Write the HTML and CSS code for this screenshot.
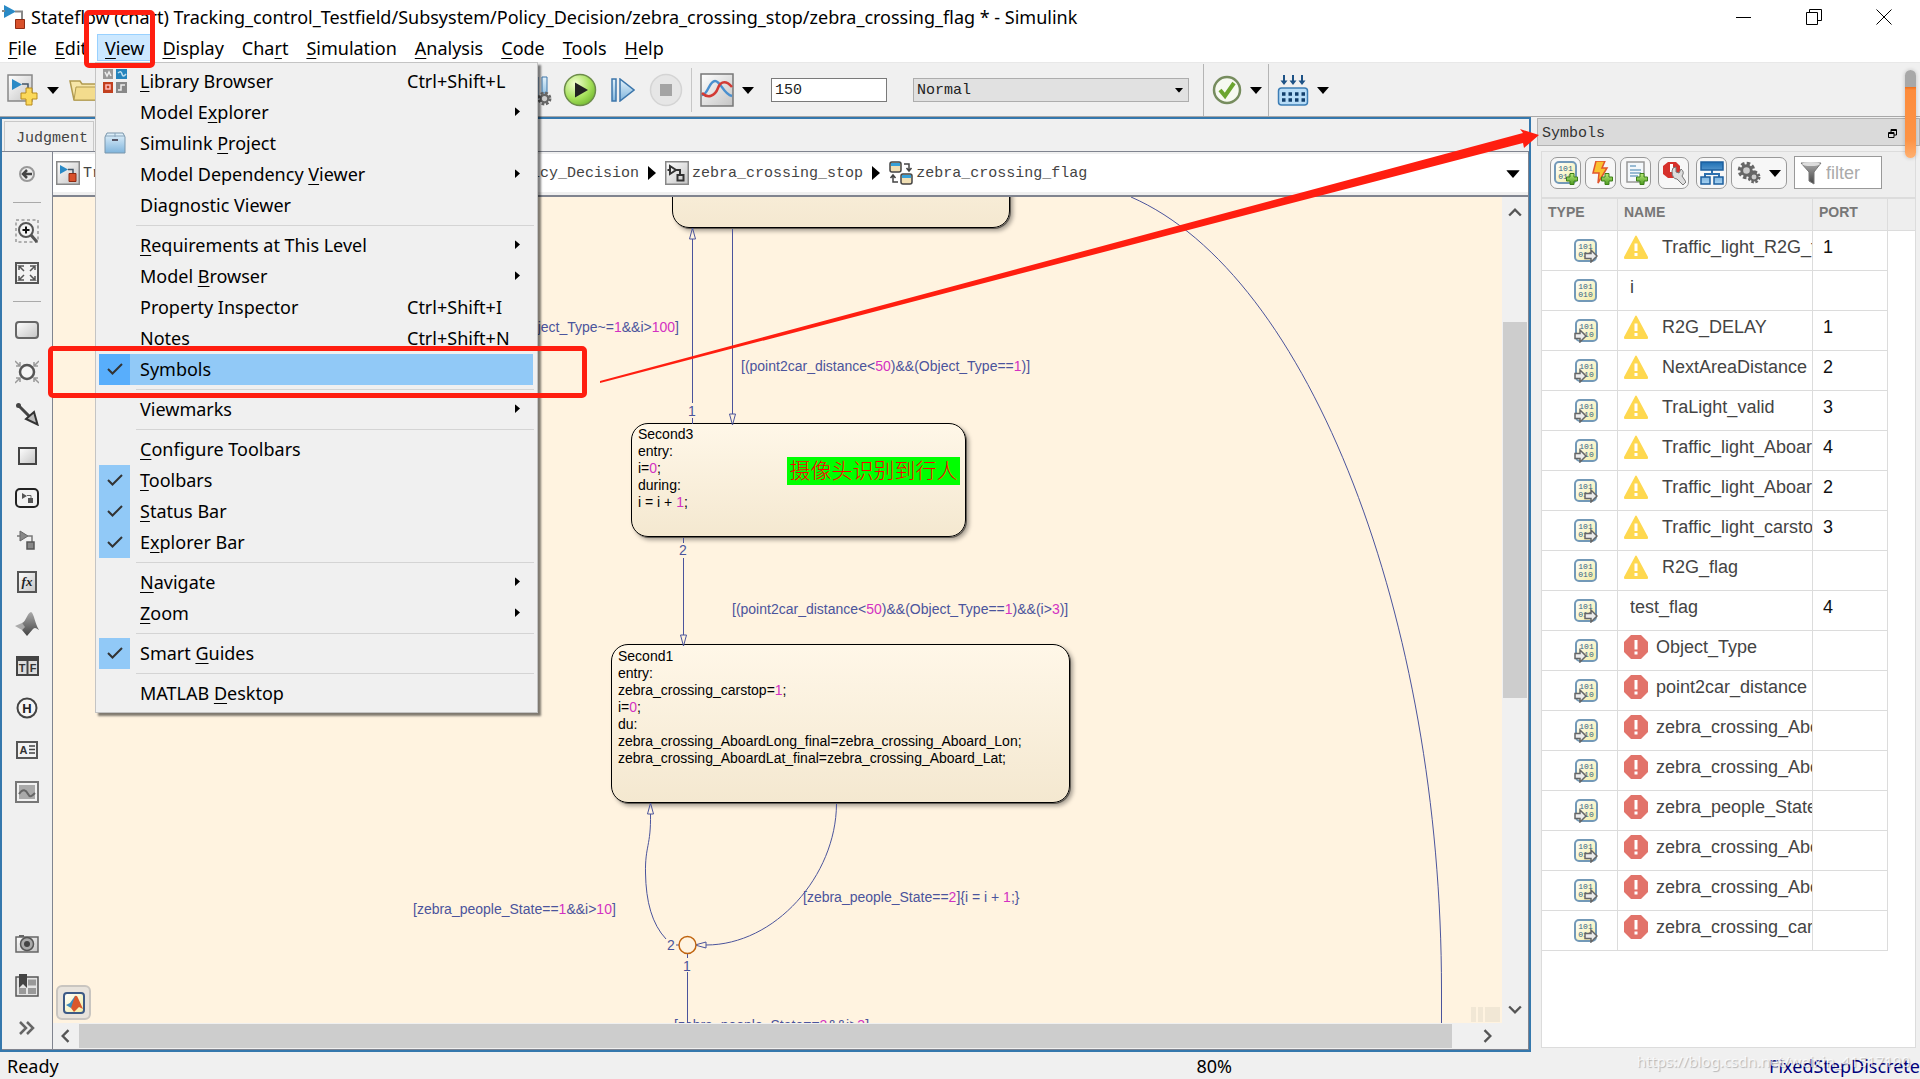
FILE: index.html
```html
<!DOCTYPE html>
<html lang="en">
<head>
<meta charset="utf-8">
<title>Stateflow (chart) - Simulink</title>
<link rel="stylesheet" href="styles.css">
</head>
<body>
<svg class="defs" aria-hidden="true">
  <defs>
    <linearGradient id="gCream" x1="0" y1="0" x2="1" y2="1"><stop offset="0" stop-color="#fff"/><stop offset="1" stop-color="#f3eca0"/></linearGradient>
    <linearGradient id="gGray" x1="0" y1="0" x2="1" y2="1"><stop offset="0" stop-color="#fff"/><stop offset="1" stop-color="#c4c4c4"/></linearGradient>
    <linearGradient id="gDark" x1="0" y1="0" x2="0" y2="1"><stop offset="0" stop-color="#aaa"/><stop offset="1" stop-color="#444"/></linearGradient>
    <linearGradient id="gBlue" x1="0" y1="0" x2="0" y2="1"><stop offset="0" stop-color="#e3f2fb"/><stop offset="1" stop-color="#7fb4dc"/></linearGradient>
    <linearGradient id="gDeep" x1="0" y1="0" x2="0" y2="1"><stop offset="0" stop-color="#1e6fb4"/><stop offset="1" stop-color="#a9d3f2"/></linearGradient>
    <linearGradient id="gPlus" x1="0" y1="0" x2="0" y2="1"><stop offset="0" stop-color="#b9ea7a"/><stop offset="1" stop-color="#4e9b21"/></linearGradient>
    <radialGradient id="gPlay" cx=".35" cy=".3" r=".8"><stop offset="0" stop-color="#f2ffd2"/><stop offset=".6" stop-color="#a5e05a"/><stop offset="1" stop-color="#6db42c"/></radialGradient>
    <symbol id="data" viewBox="0 0 24 24"><rect x="1" y="1" width="21" height="21" rx="4" fill="url(#gCream)" stroke="#7399b8" stroke-width="2"/><text x="11.500" y="10" class="bits">101</text><text x="11.500" y="18" class="bits">010</text></symbol>
    <symbol id="arrowR" viewBox="0 0 24 24"><path d="M11 14.500h6v-3.500l6 6-6 6v-3.500h-6z" fill="#ececec" stroke="#666" stroke-width="1.500"/></symbol>
    <symbol id="out" viewBox="0 0 24 24"><use href="#data"/><use href="#arrowR"/></symbol>
    <symbol id="in" viewBox="0 0 24 24"><use href="#data" x="1"/><path d="M1 14.500h5v-3.500l6 6-6 6v-3.500H1z" fill="#ececec" stroke="#666" stroke-width="1.500"/></symbol>
    <symbol id="warn" viewBox="0 0 24 24"><path d="M11 1.500Q12-.5 13 1.500L24 22q.3 2-1 2H1q-1.300 0-1-2z" fill="#fed850"/><path d="M10.500 8.500h3v7.500h-3zM10.500 18h3v3h-3z" fill="#fff"/></symbol>
    <symbol id="err" viewBox="0 0 24 24"><path d="M7 0h10l7 7v10l-7 7H7l-7-7V7z" fill="#e2736a"/><path d="M10.500 5h3v9.500h-3zM10.500 16.500h3v3h-3z" fill="#fff"/></symbol>
    <symbol id="plus" viewBox="0 0 12 12"><path d="M4 .5h4V4h3.500v4H8v3.500H4V8H.5V4H4z" fill="url(#gPlus)" stroke="#3d8019"/></symbol>
    <symbol id="gear" viewBox="0 0 20 20"><circle cx="10" cy="10" r="7.500" fill="none" stroke="#666" stroke-width="3.500" stroke-dasharray="3.600 2.290"/><circle cx="10" cy="10" r="5" fill="#ccc" stroke="#666" stroke-width="3"/></symbol>
    <symbol id="caret" viewBox="0 0 12 8"><path d="M0 1h12L6 8z"/></symbol>
    <symbol id="model" viewBox="0 0 24 24"><rect x=".75" y=".75" width="22.500" height="22.500" fill="url(#gGray)" stroke="#888" stroke-width="1.500"/><path d="M4 4v9l8-4.500z" fill="#2a8ac6"/><path d="M12 8.500h5V13" fill="none" stroke="#456" stroke-width="1.500"/><path d="M13 12.500h7v8h-7z" fill="#d8512b" stroke="#8e2b12"/></symbol>
    <symbol id="subsys" viewBox="0 0 24 24"><rect x=".75" y=".75" width="22.500" height="22.500" fill="url(#gGray)" stroke="#888" stroke-width="1.500"/><path d="M5 5v8l6-4zM11 9h4v5M12.500 14h6v5.500h-6zM2.500 9H5" fill="none" stroke="#333" stroke-width="2"/></symbol>
    <symbol id="right" viewBox="0 0 8 14"><path d="M0 0l8 7-8 7z"/></symbol>
    <symbol id="tick" viewBox="0 0 16 12"><path d="M1 6l4.500 4.500L15 1" fill="none" stroke="#333" stroke-width="2"/></symbol>
  </defs>
</svg>

<header class="titlebar">
  <svg class="appicon" viewBox="0 0 24 26"><path d="M2 1v13l12-6.500z" fill="#2a8ac6"/><path d="M0 7h3M13 7.500h7V16" fill="none" stroke="#888" stroke-width="2"/><path d="M13.500 15.500h9v9h-9z" fill="#d8512b" stroke="#8e2b12"/></svg>
  <h1>Stateflow (chart) Tracking_control_Testfield/Subsystem/Policy_Decision/zebra_crossing_stop/zebra_crossing_flag * - Simulink</h1>
  <div class="winctl">
    <button aria-label="Minimize"><svg viewBox="0 0 16 16"><path d="M0 8.500h15" stroke="#000" fill="none"/></svg></button>
    <button aria-label="Restore"><svg viewBox="0 0 16 16"><path d="M.5 3.500h11v12H.5zM3.500 3.500V.5h12v11h-4" stroke="#000" fill="none"/></svg></button>
    <button aria-label="Close"><svg viewBox="0 0 16 16"><path d="M.5.5l15 15M15.500.5l-15 15" stroke="#000" fill="none"/></svg></button>
  </div>
</header>

<nav class="menubar">
  <button><u>F</u>ile</button><button><u>E</u>dit</button><button class="open"><u>V</u>iew</button><button><u>D</u>isplay</button><button>Cha<u>r</u>t</button><button><u>S</u>imulation</button><button><u>A</u>nalysis</button><button><u>C</u>ode</button><button><u>T</u>ools</button><button><u>H</u>elp</button>
</nav>

<div class="toolbar">
  <button class="tb" aria-label="New model"><svg class="i32" viewBox="0 0 32 32"><path d="M1 1h24v26H1z" fill="url(#gGray)" stroke="#888" stroke-width="1.500"/><path d="M5 5v11l10-5.500z" fill="#2a8ac6"/><path d="M15 10h6v6" fill="none" stroke="#456" stroke-width="1.500"/><path d="M19 14h6v5h5v6h-5v6h-6v-6h-5v-6h5z" fill="#fbd95a" stroke="#b98b1c"/></svg></button>
  <button class="drop" aria-label="New menu"><svg viewBox="0 0 12 8"><use href="#caret"/></svg></button>
  <button class="tb" aria-label="Open"><svg class="i32" viewBox="0 0 32 32"><path d="M1 7h10l2 3h15v16H5z" fill="#f7e6a8" stroke="#b19a4f" stroke-width="1.500"/><path d="M7 13h24l-3 13H5z" fill="#f3dc8d" stroke="#b19a4f"/></svg></button>
  <div class="hole"></div>
  <button class="tb" aria-label="Stepping options"><svg class="i32" viewBox="0 0 32 32"><path d="M12 3h5v22h-5zM21 3h5v16h-5z" fill="url(#gBlue)" stroke="#3c76ab"/><use href="#gear" x="16" y="17" width="15" height="15"/></svg></button>
  <button class="tb" aria-label="Run"><svg class="i34" viewBox="0 0 34 34"><circle cx="17" cy="17" r="15.500" fill="url(#gPlay)" stroke="#6d8c4b" stroke-width="1.500"/><path d="M12 9.500v15L25 17z" fill="#222"/></svg></button>
  <button class="tb step" aria-label="Step forward"><svg class="i24" viewBox="0 0 24 24"><path d="M1 1h4v22H1zM9 1v22l14-11z" fill="url(#gBlue)" stroke="#3c76ab" stroke-width="1.500"/></svg></button>
  <button class="tb stop" aria-label="Stop"><svg class="i34" viewBox="0 0 34 34"><circle cx="17" cy="17" r="15.500" fill="#e6e6e6" stroke="#d4d4d4" stroke-width="1.500"/><path d="M11 11h12v12H11z" fill="#a4a4a4"/></svg></button>
  <div class="vsep"></div>
  <button class="tb" aria-label="Scope"><svg class="i34" viewBox="0 0 34 34"><path d="M1 1h32v32H1z" fill="url(#gGray)" stroke="#777" stroke-width="1.500"/><path d="M2 22c6 0 7-14 13-14s8 13 17 15" fill="none" stroke="#4a90cf" stroke-width="2.500"/><path d="M2 20c6 6 13 3 16-5s9-7 14-1" fill="none" stroke="#d23b35" stroke-width="2.500"/></svg></button>
  <button class="drop" aria-label="Scope menu"><svg viewBox="0 0 12 8"><use href="#caret"/></svg></button>
  <input class="time" type="text" value="150" aria-label="Stop time">
  <div class="mode"><select aria-label="Simulation mode"><option>Normal</option></select><svg viewBox="0 0 12 8"><use href="#caret"/></svg></div>
  <div class="vsep full"></div>
  <button class="tb" aria-label="Check"><svg class="i30" viewBox="0 0 30 30"><circle cx="15" cy="15" r="13" fill="#f6f9f0" stroke="#768c5e" stroke-width="2.500"/><path d="M8 15l5 6 9-13" fill="none" stroke="#6ba52f" stroke-width="4"/></svg></button>
  <button class="drop" aria-label="Check menu"><svg viewBox="0 0 12 8"><use href="#caret"/></svg></button>
  <div class="vsep full near"></div>
  <button class="tb" aria-label="Build"><svg class="i32" viewBox="0 0 32 32"><path d="M7 1v8M16 1v8M25 1v8" stroke="#1d5286" stroke-width="2"/><path d="M3.500 6.500h7L7 11zM12.500 6.500h7L16 11zM21.500 6.500h7L25 11z" fill="#1d5286"/><rect x="1.500" y="14" width="29" height="17" rx="3" fill="#b7dcf7" stroke="#3c7db5" stroke-width="1.500"/><path d="M5 20h23M5 26h23" stroke="#123e6b" stroke-width="3.500" stroke-dasharray="3.500 3"/></svg></button>
  <button class="drop" aria-label="Build menu"><svg viewBox="0 0 12 8"><use href="#caret"/></svg></button>
</div>

<main class="work">
  <section class="editor">
    <div class="tabs"><a href="#chart" class="tab">Judgment</a></div>
    <div class="body">
      <aside class="palette">
        <button aria-label="Hide browser"><svg viewBox="0 0 24 24"><circle cx="12" cy="12" r="7" fill="#eee" stroke="#999" stroke-width="2"/><path d="M17 12H9M12 8l-4 4 4 4" fill="none" stroke="#444" stroke-width="2.500"/></svg></button>
        <hr>
        <button aria-label="Zoom"><svg viewBox="0 0 24 24"><path d="M1 1h22v22H1z" fill="none" stroke="#999" stroke-width="1.500" stroke-dasharray="3 2.500"/><circle cx="11" cy="11" r="7" fill="#f4f4f4" stroke="#555" stroke-width="2"/><path d="M11 7.500v7M7.500 11h7" stroke="#111" stroke-width="2"/><path d="M16 16l6 7" stroke="#555" stroke-width="3"/></svg></button>
        <button aria-label="Fit to view"><svg viewBox="0 0 24 24"><path d="M1 2h22v20H1z" fill="#f2f2f2" stroke="#555" stroke-width="2"/><path d="M9 10L4 5h5M4 5v4M15 10l5-5h-5M20 5v4M9 14l-5 5h5M4 19v-4M15 14l5 5h-5M20 19v-4" fill="none" stroke="#555" stroke-width="1.500"/></svg></button>
        <hr>
        <button aria-label="State"><svg viewBox="0 0 24 24"><rect x="1" y="4" width="22" height="16" rx="3" fill="url(#gGray)" stroke="#666" stroke-width="2"/></svg></button>
        <button aria-label="Junction"><svg viewBox="0 0 24 24"><circle cx="12" cy="12" r="7" fill="#f5f5f5" stroke="#555" stroke-width="2.500"/><path d="M0 1l5 5M5 2v4H1M24 1l-5 5M19 2v4h4M0 23l5-5M5 22v-4H1M24 23l-5-5M19 22v-4h4" fill="none" stroke="#999" stroke-width="1.500"/></svg></button>
        <button aria-label="Transition"><svg viewBox="0 0 24 24"><circle cx="3.500" cy="3.500" r="2.500" fill="#444"/><path d="M3 3l12 12" stroke="#444" stroke-width="3"/><path d="M19 10l3.500 12.500L11 17z" fill="#bbb" stroke="#333" stroke-width="2"/></svg></button>
        <button aria-label="Box"><svg viewBox="0 0 24 24"><path d="M4 4h17v16H4z" fill="url(#gGray)" stroke="#444" stroke-width="2"/></svg></button>
        <button aria-label="Simulink state"><svg viewBox="0 0 24 24"><rect x="1" y="3" width="22" height="18" rx="4" fill="#f2f2f2" stroke="#222" stroke-width="2"/><path d="M7 7v6l5-3zM13 12h5v5h-5z" fill="#555"/><path d="M12 9.500h4V12" fill="none" stroke="#666"/></svg></button>
        <button aria-label="Simulink function"><svg viewBox="0 0 24 24"><path d="M5 3v10l8-5z" fill="#888" stroke="#666"/><path d="M13 8h4v6M2 8h3" fill="none" stroke="#777" stroke-width="1.500"/><path d="M12 14h7v7h-7z" fill="#888" stroke="#555" stroke-width="1.500"/></svg></button>
        <button aria-label="Function"><svg viewBox="0 0 24 24"><path d="M3 2h18v20H3z" fill="url(#gGray)" stroke="#555" stroke-width="2"/><text x="12" y="16" class="gi">fx</text></svg></button>
        <button aria-label="MATLAB function"><svg viewBox="0 0 24 24"><path d="M0 14l7-3 4 4-4 3z" fill="#aaa"/><path d="M7 11c4-1 5-10 9-11 3 1 4 12 8 18-3-2-4-3-6-1l-6 7-5-6 3-3z" fill="url(#gDark)"/></svg></button>
        <button aria-label="Truth table"><svg viewBox="0 0 24 24"><path d="M2 3h21v18H2z" fill="#ddd" stroke="#444" stroke-width="2"/><path d="M2 5h21" stroke="#444" stroke-width="4"/><path d="M12.500 3v18" stroke="#444" stroke-width="2"/><text x="7" y="18" class="gt">T</text><text x="18" y="18" class="gt">F</text></svg></button>
        <button aria-label="History junction"><svg viewBox="0 0 24 24"><circle cx="12" cy="12" r="9.500" fill="#f6f6f6" stroke="#444" stroke-width="2"/><text x="12" y="16.500" class="gh">H</text></svg></button>
        <button aria-label="Annotation"><svg viewBox="0 0 24 24"><path d="M2 4h20v16H2z" fill="#f2f2f2" stroke="#555" stroke-width="2"/><text x="8.500" y="15.500" class="gt">A</text><path d="M14 8h6M14 11.500h6M14 15h6" stroke="#444" stroke-width="1.500"/></svg></button>
        <button aria-label="Image"><svg viewBox="0 0 24 24"><path d="M1 2h22v20H1z" fill="#f2f2f2" stroke="#777" stroke-width="2"/><path d="M4 5h16v14H4z" fill="#aaa"/><path d="M4 14c4-6 7-4 9 0s4 2 7-1" fill="none" stroke="#666" stroke-width="2"/></svg></button>
        <div class="grow"></div>
        <button aria-label="Screenshot"><svg viewBox="0 0 24 24"><path d="M1 5h22v15H1z" fill="url(#gGray)" stroke="#666" stroke-width="1.500"/><path d="M4 3h5v2H4z" fill="#666"/><circle cx="12" cy="12" r="6.500" fill="#aaa" stroke="#555" stroke-width="1.500"/><circle cx="12" cy="12" r="3" fill="#444"/></svg></button>
        <button aria-label="Viewmarks"><svg viewBox="0 0 24 24"><path d="M1 3h22v19H1z" fill="#e4e4e4" stroke="#555" stroke-width="1.500"/><path d="M13 5.500h8v6h-8zM4 14h7v6H4zM13 14h8v6h-8z" fill="#999"/><path d="M4 0h8v14l-4-4-4 4z" fill="#444"/></svg></button>
        <button aria-label="More"><svg viewBox="0 0 24 24"><path d="M5 6l6 6-6 6M12 6l6 6-6 6" fill="none" stroke="#666" stroke-width="2.500"/></svg></button>
      </aside>

      <div class="view">
        <div class="crumbs">
          <div class="path">
            <svg class="ci" viewBox="0 0 24 24"><use href="#model"/></svg><a href="#top">Tracking_control_Testfield</a>
            <svg class="ca" viewBox="0 0 8 14"><use href="#right"/></svg>
            <svg class="ci" viewBox="0 0 24 24"><use href="#subsys"/></svg><a href="#subsystem">Subsystem</a>
            <svg class="ca" viewBox="0 0 8 14"><use href="#right"/></svg>
            <svg class="ci" viewBox="0 0 24 24"><use href="#subsys"/></svg><a href="#policy">Policy_Decision</a>
            <svg class="ca" viewBox="0 0 8 14"><use href="#right"/></svg>
            <svg class="ci" viewBox="0 0 24 24"><use href="#subsys"/></svg><a href="#stop">zebra_crossing_stop</a>
            <svg class="ca" viewBox="0 0 8 14"><use href="#right"/></svg>
            <svg class="ci" viewBox="0 0 24 24"><rect x="1" y="1" width="11" height="10" rx="2" fill="#f0dfb4" stroke="#444" stroke-width="1.500"/><path d="M2 2h9v3H2z" fill="#36a0d8"/><rect x="12" y="13" width="11" height="10" rx="2" fill="#f0dfb4" stroke="#444" stroke-width="1.500"/><path d="M13 14h9v3h-9z" fill="#36a0d8"/><path d="M15 3h5v6M17.500 7l2.500 3 2.500-3M9 21H4v-6M1.500 17L4 14l2.500 3" fill="none" stroke="#444" stroke-width="1.500"/></svg><a href="#flag">zebra_crossing_flag</a>
          </div>
          <button class="more" aria-label="Path history"><svg viewBox="0 0 12 8"><use href="#caret"/></svg></button>
        </div>
        <div class="scroller">
          <div class="canvas">
            <div class="state s0"></div>
            <div class="state s3">Second3<br>entry:<br>i=<b>0</b>;<br>during:<br>i = i + <b>1</b>;<span class="note">摄像头识别到行人</span></div>
            <div class="state s1">Second1<br>entry:<br>zebra_crossing_carstop=<b>1</b>;<br>i=<b>0</b>;<br>du:<br>zebra_crossing_AboardLong_final=zebra_crossing_Aboard_Lon;<br>zebra_crossing_AboardLat_final=zebra_crossing_Aboard_Lat;</div>
            <svg class="wires" viewBox="53 197 1449 826">
              <path d="M692.500 424v-6M692.500 403V239M692.500 228l-3 11h6zM732.500 229v185M732.500 425l-3-11h6zM683.500 538v5M683.500 558v77M683.500 646l-3-11h6zM650.500 803l-3 11h6zM650.500 814C651 846 645 846 645.500 873C646 902 652 924 666 939M836.500 804C836 876 775 945 706 945M695 945l11-3v6zM676 945h3M687.500 954v4M687.500 972v51"/>
              <path d="M1131 197C1310 275 1441.500 620 1441.500 990V1023"/>
              <circle cx="687.500" cy="945" r="8.500"/>
              <g class="watermark"><path d="M1471 1007h5v15h-5zM1478 1007h5v15h-5zM1485 1007h15v15h-15z"/></g>
            </svg>
            <span class="lbl l1">[(Object_Type~=<b>1</b>&amp;&amp;i&gt;<b>100</b>]</span>
            <span class="lbl l2">[(point2car_distance&lt;<b>50</b>)&amp;&amp;(Object_Type==<b>1</b>)]</span>
            <span class="lbl l3">[(point2car_distance&lt;<b>50</b>)&amp;&amp;(Object_Type==<b>1</b>)&amp;&amp;(i&gt;<b>3</b>)]</span>
            <span class="lbl l4">[zebra_people_State==<b>1</b>&amp;&amp;i&gt;<b>10</b>]</span>
            <span class="lbl l5">[zebra_people_State==<b>2</b>]{i = i + <b>1</b>;}</span>
            <span class="lbl l6">[zebra_people_State==<b>2</b>&amp;&amp;i&gt;<b>3</b>]</span>
            <span class="lbl n1">1</span><span class="lbl n2">2</span><span class="lbl n3">2</span><span class="lbl n4">1</span>
            <button class="lang" aria-label="MATLAB action language"><svg viewBox="0 0 24 24"><rect x="2" y="2" width="20" height="20" rx="3" fill="url(#gCream)" stroke="#3c5a86" stroke-width="2"/><path d="M4 14l4-2 5-7 2 5-6 7z" fill="#3c8bbd"/><path d="M13 5q2-1 3 2l5 11-4-2-5 5-3-4z" fill="#d9572b"/></svg></button>
          </div>
          <div class="vbar"><svg viewBox="0 0 12 12"><path d="M1 9l5-5 5 5" class="chev"/></svg><i></i><svg viewBox="0 0 12 12"><path d="M1 3l5 5 5-5" class="chev"/></svg></div>
          <div class="hbar"><svg viewBox="0 0 12 12"><path d="M9 1L4 6l5 5" class="chev"/></svg><i></i><svg viewBox="0 0 12 12"><path d="M3 1l5 5-5 5" class="chev"/></svg></div>
        </div>
      </div>
    </div>
  </section>

  <aside class="symbols">
    <h2>Symbols<svg viewBox="0 0 9 9"><path d="M3 3V.5h5.500V6H6M.5 3.500H6v5H.5zM.5 4.500H6M3 1.500h5.500" fill="none" stroke="#000"/></svg></h2>
    <div class="pane">
      <div class="tools">
        <button aria-label="Create data"><svg viewBox="0 0 24 24"><use href="#data"/><use href="#plus" x="12" y="12" width="12" height="12"/></svg></button>
        <button aria-label="Create event"><svg viewBox="0 0 24 24"><path d="M7 0h9l-3 7h5L9 22l1-10H4z" fill="#f9c22f" stroke="#e1552c" stroke-width="1.500"/><use href="#plus" x="12" y="12" width="12" height="12"/></svg></button>
        <button class="wide" aria-label="Create message"><svg viewBox="0 0 24 24"><path d="M3 1h17v20H3z" fill="#f4f8fb" stroke="#999" stroke-width="1.500"/><path d="M6 5h6M6 9h11M6 12h11M6 15h8" stroke="#7aa7c7" stroke-width="1.500"/><use href="#plus" x="12" y="12" width="12" height="12"/></svg></button>
        <button class="wide" aria-label="Resolve symbols"><svg viewBox="0 0 24 24"><path d="M6 1h8l4 4v8l-4 4H6l-5-4V5z" fill="#d6312b"/><path d="M8 3h3v8H8z" fill="#fff"/><path d="M10 10q0-4 4-4v5l3 1 2-4q4 3 1 7l4 6-3 3-6-6q-5 0-5-8z" fill="#ddd" stroke="#777"/></svg></button>
        <button aria-label="Show hierarchy"><svg viewBox="0 0 24 24"><path d="M12 9v4M5 17v-4h14v4" fill="none" stroke="#2c6fae" stroke-width="2"/><path d="M1 1h22v8H1zM1 16h9v7H1zM14 16h9v7h-9z" fill="url(#gDeep)" stroke="#1d5f9e" stroke-width="1.500"/></svg></button>
        <button class="menu" aria-label="Settings"><svg viewBox="0 0 24 24"><use href="#gear" x="0" y="0" width="19" height="19"/><use href="#gear" x="10" y="9" width="14" height="14"/></svg><svg class="c" viewBox="0 0 12 8"><use href="#caret"/></svg></button>
        <label class="filter"><svg viewBox="0 0 22 24"><path d="M1 2h20l-7 9v12l-5-3v-9z" fill="url(#gDark)" stroke="#777"/><ellipse cx="11" cy="3" rx="9" ry="2" fill="#ddd"/></svg><input type="text" placeholder="filter" aria-label="filter"></label>
      </div>
      <table>
        <colgroup><col class="c1"><col class="c2"><col class="c3"><col></colgroup>
        <thead><tr><th>TYPE</th><th>NAME</th><th>PORT</th><th></th></tr></thead>
        <tbody>
          <tr><td><svg><use href="#out"/></svg></td><td class="w"><div><svg><use href="#warn"/></svg>Traffic_light_R2G_time</div></td><td>1</td></tr>
          <tr><td><svg><use href="#data"/></svg></td><td><div>i</div></td><td></td></tr>
          <tr><td><svg><use href="#in"/></svg></td><td class="w"><div><svg><use href="#warn"/></svg>R2G_DELAY</div></td><td>1</td></tr>
          <tr><td><svg><use href="#in"/></svg></td><td class="w"><div><svg><use href="#warn"/></svg>NextAreaDistance</div></td><td>2</td></tr>
          <tr><td><svg><use href="#in"/></svg></td><td class="w"><div><svg><use href="#warn"/></svg>TraLight_valid</div></td><td>3</td></tr>
          <tr><td><svg><use href="#in"/></svg></td><td class="w"><div><svg><use href="#warn"/></svg>Traffic_light_Aboard</div></td><td>4</td></tr>
          <tr><td><svg><use href="#out"/></svg></td><td class="w"><div><svg><use href="#warn"/></svg>Traffic_light_Aboard</div></td><td>2</td></tr>
          <tr><td><svg><use href="#out"/></svg></td><td class="w"><div><svg><use href="#warn"/></svg>Traffic_light_carstop</div></td><td>3</td></tr>
          <tr><td><svg><use href="#data"/></svg></td><td class="w"><div><svg><use href="#warn"/></svg>R2G_flag</div></td><td></td></tr>
          <tr><td><svg><use href="#out"/></svg></td><td><div>test_flag</div></td><td>4</td></tr>
          <tr><td><svg><use href="#in"/></svg></td><td class="e"><div><svg><use href="#err"/></svg>Object_Type</div></td><td></td></tr>
          <tr><td><svg><use href="#in"/></svg></td><td class="e"><div><svg><use href="#err"/></svg>point2car_distance</div></td><td></td></tr>
          <tr><td><svg><use href="#in"/></svg></td><td class="e"><div><svg><use href="#err"/></svg>zebra_crossing_Aboard</div></td><td></td></tr>
          <tr><td><svg><use href="#in"/></svg></td><td class="e"><div><svg><use href="#err"/></svg>zebra_crossing_Aboard</div></td><td></td></tr>
          <tr><td><svg><use href="#in"/></svg></td><td class="e"><div><svg><use href="#err"/></svg>zebra_people_State</div></td><td></td></tr>
          <tr><td><svg><use href="#out"/></svg></td><td class="e"><div><svg><use href="#err"/></svg>zebra_crossing_Aboard</div></td><td></td></tr>
          <tr><td><svg><use href="#out"/></svg></td><td class="e"><div><svg><use href="#err"/></svg>zebra_crossing_Aboard</div></td><td></td></tr>
          <tr><td><svg><use href="#out"/></svg></td><td class="e"><div><svg><use href="#err"/></svg>zebra_crossing_carstop</div></td><td></td></tr>
        </tbody>
      </table>
    </div>
  </aside>
</main>

<footer class="status"><span>Ready</span><span class="pct">80%</span><span class="solver">FixedStepDiscrete</span></footer>

<div class="popup">
  <button><svg class="mi" viewBox="0 0 24 24"><path d="M0 0h10v10H0z" fill="#999"/><path d="M2 3l2 4 2-4 2 4" stroke="#eee" fill="none" stroke-width="1.500"/><path d="M13 0h11v10H13z" fill="#2584bd"/><path d="M15 4q3-3 4 1t4 0" stroke="#bde" fill="none" stroke-width="1.500"/><path d="M0 13h10v11H0z" fill="#c2401f"/><path d="M3 16h4v4H3z" stroke="#fbb" fill="none" stroke-width="1.500"/><path d="M13 13h11v11H13z" fill="#888"/><path d="M15 21h3v-5h4" stroke="#eee" fill="none" stroke-width="1.500"/></svg><span><u>L</u>ibrary Browser</span><kbd>Ctrl+Shift+L</kbd></button>
  <button><span>Model E<u>x</u>plorer</span><svg class="sub" viewBox="0 0 8 14"><use href="#right"/></svg></button>
  <button><svg class="mi" viewBox="0 0 24 24"><path d="M2 6l2-4h16l2 4v16H2z" fill="url(#gBlue)" stroke="#7a96ab"/><path d="M2 5h20M12 2v4" stroke="#8aa6bb"/><path d="M9 8h6v2H9z" fill="#556"/></svg><span>Simulink <u>P</u>roject</span></button>
  <button><span>Model Dependency <u>V</u>iewer</span><svg class="sub" viewBox="0 0 8 14"><use href="#right"/></svg></button>
  <button><span>Diagnostic Viewer</span></button>
  <hr>
  <button><span><u>R</u>equirements at This Level</span><svg class="sub" viewBox="0 0 8 14"><use href="#right"/></svg></button>
  <button><span>Model <u>B</u>rowser</span><svg class="sub" viewBox="0 0 8 14"><use href="#right"/></svg></button>
  <button><span>Property Inspector</span><kbd>Ctrl+Shift+I</kbd></button>
  <button><span>Notes</span><kbd>Ctrl+Shift+N</kbd></button>
  <button class="on hot"><span>Symbols</span><svg class="ck" viewBox="0 0 16 12"><use href="#tick"/></svg></button>
  <hr>
  <button><span>Viewmarks</span><svg class="sub" viewBox="0 0 8 14"><use href="#right"/></svg></button>
  <hr>
  <button><span><u>C</u>onfigure Toolbars</span></button>
  <button class="on"><span><u>T</u>oolbars</span><svg class="ck" viewBox="0 0 16 12"><use href="#tick"/></svg></button>
  <button class="on"><span><u>S</u>tatus Bar</span><svg class="ck" viewBox="0 0 16 12"><use href="#tick"/></svg></button>
  <button class="on"><span>E<u>x</u>plorer Bar</span><svg class="ck" viewBox="0 0 16 12"><use href="#tick"/></svg></button>
  <hr>
  <button><span><u>N</u>avigate</span><svg class="sub" viewBox="0 0 8 14"><use href="#right"/></svg></button>
  <button><span><u>Z</u>oom</span><svg class="sub" viewBox="0 0 8 14"><use href="#right"/></svg></button>
  <hr>
  <button class="on"><span>Smart <u>G</u>uides</span><svg class="ck" viewBox="0 0 16 12"><use href="#tick"/></svg></button>
  <hr>
  <button><span>MATLAB <u>D</u>esktop</span></button>
</div>

<svg class="ink" viewBox="0 0 1920 400" aria-hidden="true"><path d="M600 381L1523 133l-3-4 19 6-15 13-1-5L600 383z"/></svg>
<div class="mark m1"></div>
<div class="mark m2"></div>
<div class="grip"></div>
<div class="stamp">https://blog.csdn.net/weixin_41517190</div>
</body>
</html>
```
FILE: styles.css
```css
* { box-sizing: border-box; }
body {
  margin: 0;
  position: relative;
  height: 100vh;
  display: flex;
  flex-direction: column;
  overflow: hidden;
  background: #f0f0f0;
  color: #000;
  font: 18px/24px "Noto Sans", "Open Sans", sans-serif;
}
button { margin: 0; padding: 0; border: 0; background: none; font: inherit; color: inherit; }
svg { display: block; flex: none; }
a { color: inherit; text-decoration: none; }
u { text-underline-offset: 3px; text-decoration-thickness: 1px; }
.defs { position: absolute; width: 0; height: 0; }
.bits { font: 8px "Liberation Mono", monospace; fill: #2f5f84; text-anchor: middle; }

/* title and menu bars */
.titlebar { display: flex; align-items: center; height: 34px; background: #fff; flex: none; }
.appicon { width: 24px; height: 26px; margin-left: 2px; }
.titlebar h1 { margin: 0 auto 0 5px; font-size: 18px; font-weight: 400; white-space: nowrap; }
.winctl { display: flex; gap: 54px; padding-right: 28px; }
.winctl svg { width: 16px; height: 16px; }
.menubar { display: flex; gap: 2px; height: 29px; padding-bottom: 1px; background: #fff; border-bottom: 1px solid #e8e8e8; flex: none; }
.menubar button { padding: 0 8px; white-space: nowrap; }
.menubar button.open { background: #cce8ff; box-shadow: inset 0 0 0 1px #99d1ff; }

/* toolbar */
.toolbar { display: flex; align-items: center; height: 54px; padding-left: 7px; border-bottom: 1px solid #a8a8a8; flex: none; }
.i24 { width: 24px; height: 24px; }
.i30 { width: 30px; height: 30px; }
.i32 { width: 32px; height: 32px; }
.i34 { width: 34px; height: 34px; }
.drop { margin-left: 8px; }
.drop svg { width: 12px; height: 8px; }
.drop + .tb { margin-left: 10px; }
.hole { width: 420px; }
.tb + .tb { margin-left: 10px; }
.tb + .tb.step { margin-left: 14px; }
.tb + .tb.stop { margin-left: 14px; }
.vsep { width: 1px; height: 44px; margin: 0 8px; background: #c6c6c6; }
.vsep.full { height: 52px; margin-left: 14px; background: #b4b4b4; }
.vsep.near { margin-left: 6px; }
.time, .mode select { font: 15px/20px "Liberation Mono", monospace; height: 24px; color: #222; }
.time { width: 116px; margin: 0 26px 0 17px; padding: 2px 3px 0; border: 1px solid #7a7a7a; background: #fff; }
.mode { display: grid; align-items: center; width: 276px; }
.mode > * { grid-area: 1 / 1; }
.mode select { width: 100%; padding: 2px 3px 0; border: 1px solid #adadad; border-radius: 0; background: #e1e1e1; appearance: none; }
.mode svg { width: 8px; height: 6px; justify-self: end; margin-right: 6px; }

/* editor */
.work { flex: 1; min-height: 0; display: flex; }
.editor { flex: 1; min-width: 0; display: flex; flex-direction: column; border: 2px solid #3578ad; }
.tabs { height: 33px; padding: 2px 2px 0; border-bottom: 1px solid #80848f; flex: none; }
.tab { display: block; width: 90px; height: 30px; padding: 5px 0 0 11px; border: 1px solid #c8c8c8; border-bottom: 0; font: 15px/24px "Liberation Mono", monospace; color: #444; }
.body { flex: 1; min-height: 0; display: flex; border-bottom: 1px solid #80848f; }
.palette { width: 50px; padding-top: 1px; display: flex; flex-direction: column; align-items: center; flex: none; }
.palette button { height: 42px; display: flex; align-items: center; flex: none; }
.palette svg { width: 24px; height: 24px; }
.palette hr { width: 28px; height: 1px; margin: 7px 0; border: 0; background: #aaa; flex: none; }
.grow { flex: 1; }
.gi { font: italic bold 13px "Liberation Serif", serif; text-anchor: middle; fill: #222; }
.gt { font: bold 11px "Liberation Sans", sans-serif; text-anchor: middle; fill: #333; }
.gh { font: bold 13px "Liberation Sans", sans-serif; text-anchor: middle; fill: #222; }
.view { flex: 1; min-width: 0; display: flex; flex-direction: column; border-left: 1px solid #80848f; border-right: 1px solid #80848f; }
.crumbs { height: 43px; display: flex; align-items: center; justify-content: space-between; padding-left: 3px; background: #fff; border: solid #f0f0f0; border-width: 2px 0 3px; flex: none; }
.path { display: flex; align-items: center; font: 15px/24px "Liberation Mono", monospace; color: #444; white-space: nowrap; }
.path a { padding-top: 2px; }
.ci { width: 24px; height: 24px; margin-right: 3px; }
.ca { width: 8px; height: 14px; margin: 0 9px; }
.more { padding-right: 8px; }
.more svg { width: 14px; height: 9px; }
.scroller { flex: 1; min-height: 0; display: grid; grid-template: minmax(0, 1fr) 26px / minmax(0, 1fr) 26px; border-top: 2px solid #80848f; }
.canvas { position: relative; overflow: hidden; background: #fff3e0; font: 14px/17px "Liberation Sans", Arial, sans-serif; }
.wires { position: absolute; left: 0; top: 0; width: 1449px; height: 826px; }
.wires path { fill: none; stroke: #4b549c; stroke-width: 1; }
.wires circle { fill: #fff3e0; stroke: #c0640f; stroke-width: 1.5; }
.wires .watermark path { fill: #f1e7d5; stroke: none; }
.state { position: absolute; padding: 2px 6px; border: 1px solid #000; border-radius: 17px; background: linear-gradient(#fff7e8, #f4e8d0); box-shadow: 1px 1px 0 rgba(0, 0, 0, .45), 3px 3px 4px rgba(0, 0, 0, .35); white-space: nowrap; }
.s0 { left: 619px; top: -80px; width: 338px; height: 111px; }
.s3 { left: 578px; top: 226px; width: 335px; height: 114px; }
.s1 { left: 558px; top: 447px; width: 459px; height: 159px; padding-top: 3px; }
.state b, .lbl b { font-weight: 400; color: #d331c2; }
.note { position: absolute; left: 155px; top: 33px; width: 173px; height: 28px; background: #0f0; color: #f00; font: 21px/25px "Noto Sans CJK SC", sans-serif; font-weight: 300; text-align: center; }
.lbl { position: absolute; color: #4b549c; white-space: nowrap; }
.l1 { right: 823px; top: 122px; }
.l2 { left: 688px; top: 161px; }
.l3 { left: 679px; top: 404px; }
.l4 { left: 360px; top: 704px; }
.l5 { left: 750px; top: 692px; }
.l6 { left: 621px; top: 820px; }
.n1 { left: 635px; top: 206px; }
.n2 { left: 626px; top: 345px; }
.n3 { left: 614px; top: 740px; }
.n4 { left: 630px; top: 761px; }
.lang { position: absolute; left: 3px; bottom: 3px; width: 35px; height: 35px; display: grid; place-items: center; border: 2px solid #c9c5c0; border-radius: 6px; background: #e8e3dc; }
.lang svg { width: 24px; height: 24px; }
.vbar, .hbar { display: flex; align-items: center; }
.vbar { flex-direction: column; padding: 8px 1px 6px 0; }
.vbar i { width: 24px; height: 376px; margin: 103px 0 auto; background: #cdcdcd; }
.hbar { padding: 0 7px 0 5px; }
.hbar i { flex: 1; height: 24px; margin: 0 29px 0 7px; background: #cdcdcd; }
.vbar svg, .hbar svg { width: 14px; height: 14px; }
.chev { fill: none; stroke: #555; stroke-width: 2; }

/* symbols panel */
.symbols { width: 389px; padding-left: 6px; display: flex; flex-direction: column; flex: none; }
.symbols h2 { height: 28px; margin: 1px 0 5px; padding: 3px 22px 0 4px; display: flex; align-items: center; justify-content: space-between; border: 1px solid #b2b2b2; background: #dadada; font: 15px/24px "Liberation Mono", monospace; color: #333; }
.symbols h2 svg { width: 9px; height: 9px; }
.pane { flex: 1; min-height: 0; margin: 0 4px 4px; border: 1px solid #dcdcdc; background: #fff; overflow: hidden; font: 18px/24px "Liberation Sans", Arial, sans-serif; }
.tools { display: flex; align-items: center; gap: 4px; height: 47px; padding: 0 0 4px 8px; background: #eee; border-bottom: 2px solid #dcdcdc; }
.tools button { width: 31px; height: 32px; display: flex; align-items: center; justify-content: center; border: 1px solid #999; border-radius: 7px; background: #f7f7f7; }
.tools .wide { margin-right: 3px; }
.tools svg { width: 24px; height: 24px; }
.tools .menu { width: 56px; gap: 8px; }
.tools .c { width: 12px; height: 8px; }
.filter { display: flex; align-items: center; width: 88px; height: 33px; margin-left: 3px; padding-left: 5px; border: 1px solid #999; background: #fff; }
.tools .filter svg { width: 22px; }
.filter input { width: 54px; padding: 0 0 0 4px; border: 0; background: none; font: inherit; }
.filter input::placeholder { color: #aaa; }
table { width: 100%; table-layout: fixed; border-spacing: 0; }
.c1 { width: 76px; }
.c2 { width: 195px; }
.c3 { width: 75px; }
th { height: 32px; padding: 0 6px 6px; text-align: left; font-size: 14px; line-height: 24px; color: #777; background: #eee; border-right: 1px solid #dcdcdc; border-bottom: 1px solid #dcdcdc; }
th:last-child { border-right: 0; }
td { height: 40px; padding: 4px 10px 0; vertical-align: top; border-right: 1px solid #dcdcdc; border-bottom: 1px solid #dcdcdc; color: #111; }
td svg { width: 24px; height: 24px; }
td:first-child { padding: 8px 0 0 32px; }
td:nth-child(2) { padding: 4px 0 0 12px; color: #444; }
td:nth-child(2).w, td:nth-child(2).e { padding-left: 6px; }
td div { display: flex; overflow: hidden; white-space: nowrap; }
.w div { gap: 14px; }
.e div { gap: 8px; }

/* status bar */
.status { display: flex; height: 27px; padding: 2px 0 0 7px; white-space: nowrap; flex: none; }
.status span { flex: 1; }
.status .pct { flex: 0 0 auto; }
.status .solver { flex: 0 0 auto; width: 688px; text-align: right; color: #00007c; }

/* open View menu */
.popup { position: absolute; left: 95px; top: 62px; width: 443px; padding: 3px; border: 1px solid #c4c4c4; background: #f0f0f0; box-shadow: 3px 3px 2px rgba(0, 0, 0, .5); }
.popup button { position: relative; display: flex; align-items: center; width: 434px; height: 31px; padding: 0 0 2px 41px; text-align: left; white-space: nowrap; }
.popup span { flex: 1; }
.popup kbd { width: 126px; font: inherit; }
.popup hr { height: 1px; margin: 4px 0 4px 37px; border: 0; background: #d4d4d4; }
.popup .on { background: linear-gradient(#91c9f7, #91c9f7) 0 0 / 31px 100% no-repeat; }
.popup .hot { background: linear-gradient(#58aefc, #58aefc) 0 0 / 31px 100% no-repeat #91c9f7; }
.mi { position: absolute; left: 4px; top: 3px; width: 24px; height: 24px; }
.ck { position: absolute; left: 8px; top: 9px; width: 16px; height: 12px; }
.sub { width: 5px; height: 9px; margin-right: 13px; }

/* overlays */
.ink { position: absolute; left: 0; top: 0; width: 1920px; height: 400px; fill: #ff1e10; pointer-events: none; }
.mark { position: absolute; border: 5px solid #ff1e10; border-radius: 5px; }
.m1 { left: 84px; top: 10px; width: 71px; height: 58px; }
.m2 { left: 48px; top: 346px; width: 539px; height: 52px; }
.grip { position: absolute; right: 4px; top: 70px; width: 11px; height: 88px; border-radius: 6px; background: linear-gradient(#a8a8a8 17px, #f0701c 17px, #fd8c3c 20px, #fd9345 70px, #ffb070); box-shadow: 0 0 4px rgba(0, 0, 0, .2); }
.stamp { position: absolute; right: 10px; bottom: 6px; font-size: 15px; color: rgba(255, 255, 255, .75); text-shadow: 1px 1px 1px rgba(0, 0, 0, .25); }
```
